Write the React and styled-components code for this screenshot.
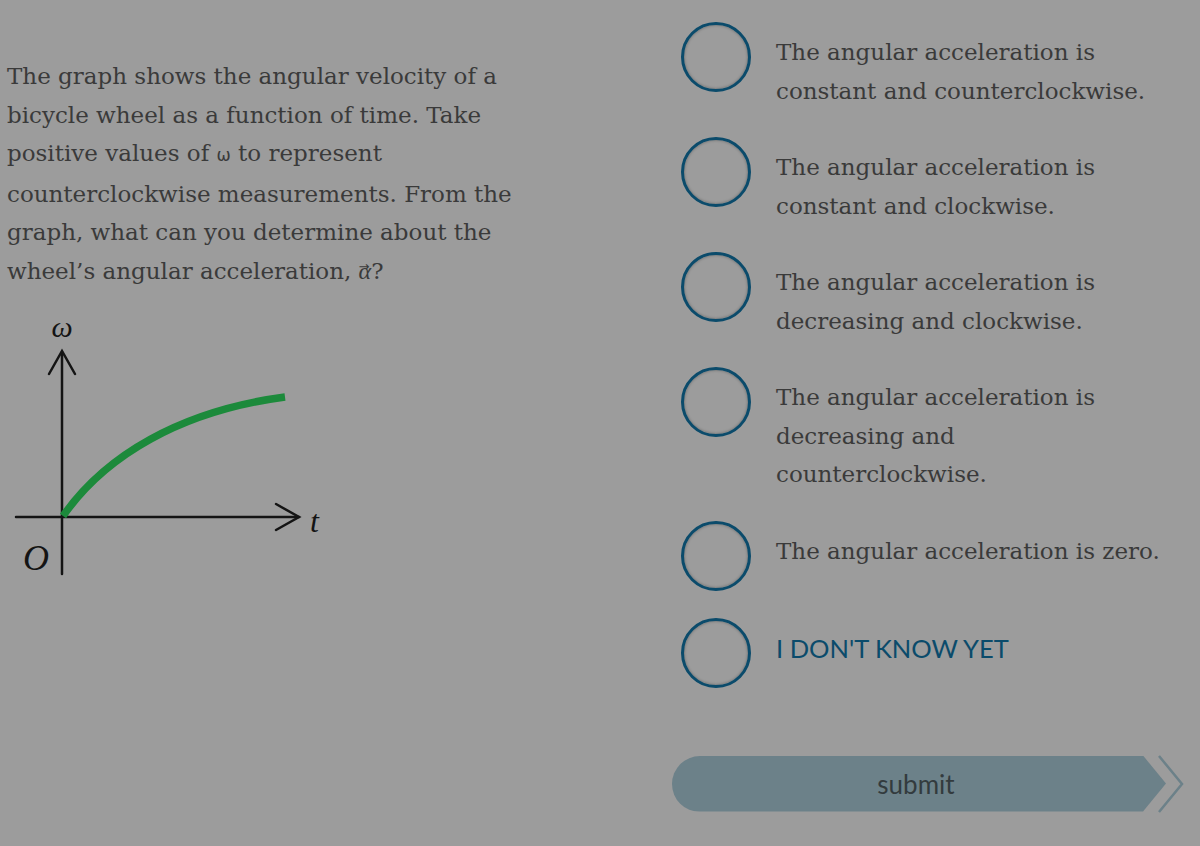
import React from 'react'
import styled, { createGlobalStyle } from 'styled-components'

const GlobalStyle = createGlobalStyle`
    html, body {
        margin: 0;
        padding: 0;
        background: #9c9c9c;
    }
    body {
        font-family: "DejaVu Serif", "Liberation Serif", serif;
    }
`;

const Page = styled.div`
    width: 1200px;
    height: 846px;
    display: flex;
    background: #9c9c9c;
    overflow: hidden;
`;

const Left = styled.div`
    width: 560px;
    padding: 57px 0 0 7px;
    box-sizing: border-box;
`;

const Question = styled.p`
    margin: 0;
    font-size: 23px;
    line-height: 38.5px;
    color: #3a3a3a;
    width: 535px;
`;

const Omega = styled.span`
    font-family: "DejaVu Sans", sans-serif;
    font-size: 17px;
`;

const Alpha = styled.span`
    position: relative;
    font-family: "Liberation Serif", serif;
    font-style: italic;
    font-size: 24px;

    &::after {
        content: "→";
        position: absolute;
        left: 0;
        top: -10px;
        font-family: "DejaVu Sans", sans-serif;
        font-size: 13px;
        font-style: normal;
    }
`;

const Graph = styled.svg`
    display: block;
    margin-top: 11px;
    margin-left: -7px;
`;

const Right = styled.div`
    padding: 22px 0 0 121px;
    flex: 1;
`;

const Option = styled.label`
    display: flex;
    align-items: flex-start;
    gap: 25px;
    margin-bottom: 27px;
    cursor: pointer;
`;

const Circle = styled.span`
    flex: none;
    width: 70px;
    height: 70px;
    box-sizing: border-box;
    border-radius: 50%;
    border: 3px solid #0b4b6b;
    box-shadow: inset 0 0 3px rgba(0, 0, 0, 0.35);
`;

const OptionText = styled.span`
    padding-top: 11px;
    font-size: 23px;
    line-height: 38.5px;
    color: #3a3a3a;
    width: 385px;
`;

const DontKnow = styled.span`
    padding-top: 11px;
    font-family: Lato, "Liberation Sans", sans-serif;
    font-size: 25.5px;
    line-height: 38.5px;
    color: #0b4b6b;
`;

const SubmitRow = styled.div`
    display: flex;
    align-items: center;
    margin-top: 67px;
    margin-left: -9px;
`;

const SubmitButton = styled.button`
    width: 494px;
    height: 56px;
    border: none;
    border-radius: 28px 0 0 28px;
    background: #6c8189;
    clip-path: polygon(0 0, calc(100% - 23px) 0, 100% 50%, calc(100% - 23px) 100%, 0 100%);
    font-family: Lato, "Liberation Sans", sans-serif;
    font-size: 26px;
    color: #333b3e;
    padding: 0 6px 0 0;
    cursor: pointer;
`;

const Chevron = styled.svg`
    margin-left: -8px;
`;

const options = [
    'The angular acceleration is constant and counterclockwise.',
    'The angular acceleration is constant and clockwise.',
    'The angular acceleration is decreasing and clockwise.',
    'The angular acceleration is decreasing and counterclockwise.',
    'The angular acceleration is zero.',
]

const App = () => {
    return (
        <>
            <GlobalStyle />
            <Page>
                <Left>
                    <Question>
                        The graph shows the angular velocity of a bicycle wheel as a function of time. Take
                        positive values of <Omega>ω</Omega> to represent counterclockwise measurements. From
                        the graph, what can you determine about the wheel’s angular acceleration, <Alpha>α</Alpha>?
                    </Question>
                    <Graph width="340" height="290" viewBox="0 300 340 290">
                        <g stroke="#141414" strokeWidth="2.5" fill="none" strokeLinecap="round">
                            <line x1="62" y1="351" x2="62" y2="573" />
                            <polyline points="49,373 62,350 75,373" />
                            <line x1="16" y1="516" x2="299" y2="516" />
                            <polyline points="276,503 299,516 276,529" />
                        </g>
                        <path d="M63,515 C105,455 180,410 285,396" stroke="#1c8a3b" strokeWidth="7.5" fill="none" />
                        <g fill="#141414" fontFamily="'Liberation Serif', serif" fontStyle="italic">
                            <text x="62" y="336" fontSize="30" textAnchor="middle">ω</text>
                            <text x="310" y="531" fontSize="32">t</text>
                            <text x="36" y="569" fontSize="36" textAnchor="middle">O</text>
                        </g>
                    </Graph>
                </Left>
                <Right>
                    {options.map(text => (
                        <Option key={text}>
                            <Circle />
                            <OptionText>{text}</OptionText>
                        </Option>
                    ))}
                    <Option>
                        <Circle />
                        <DontKnow>I DON'T KNOW YET</DontKnow>
                    </Option>
                    <SubmitRow>
                        <SubmitButton>submit</SubmitButton>
                        <Chevron width="28" height="58" viewBox="0 0 28 58">
                            <polyline points="1,1 24,29 1,57" fill="none" stroke="#6c8189" strokeWidth="2.5" />
                        </Chevron>
                    </SubmitRow>
                </Right>
            </Page>
        </>
    )
}

export default App
